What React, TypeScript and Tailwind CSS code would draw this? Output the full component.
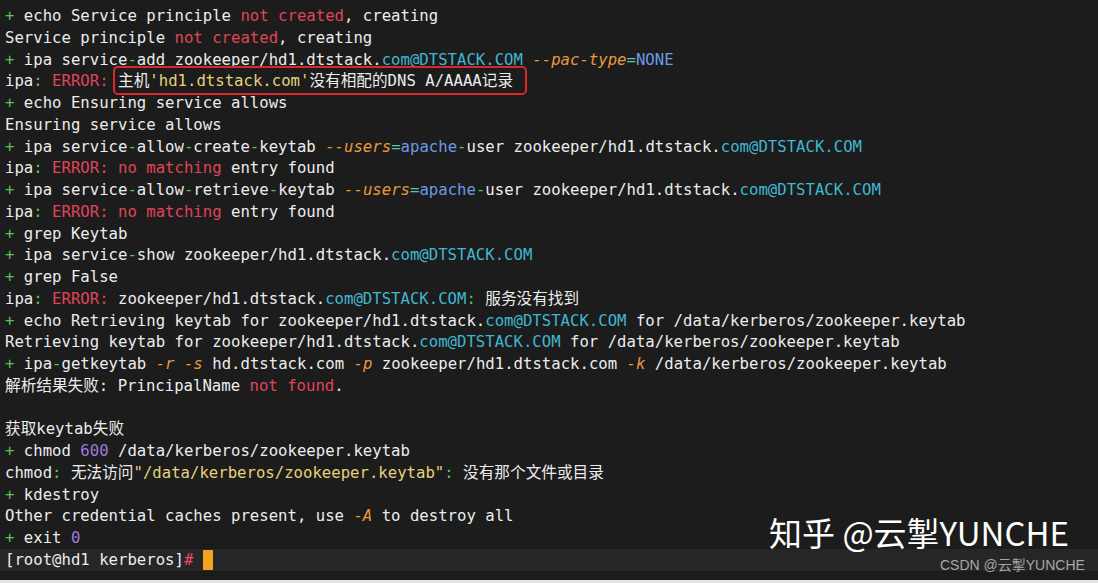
import React from "react";

type Seg = [string, string?];

const G = "text-[#58c458]";
const R = "text-[#e0445a]";
const C = "text-[#41b6cf]";
const O = "text-[#e8993c] italic";
const T = "text-[#5cc6a8]";
const B = "text-[#6b9ae6]";
const Y = "text-[#e4d27a]";
const P = "text-[#9b7bdc]";
const K = "text-[#e84a6a]";

const lines: Seg[][] = [
  [["+", G], [" echo Service principle "], ["not created", R], [", creating"]],
  [["Service principle "], ["not created", R], [", creating"]],
  [["+", G], [" ipa service"], ["-", G], ["add zookeeper/hd1.dtstack."], ["com@DTSTACK.COM", C], [" "], ["--pac-type", O], ["=", T], ["NONE", B]],
  [],
  [["+", G], [" echo Ensuring service allows"]],
  [["Ensuring service allows"]],
  [["+", G], [" ipa service"], ["-", G], ["allow"], ["-", G], ["create"], ["-", G], ["keytab "], ["--users", O], ["=", T], ["apache", B], ["-", G], ["user zookeeper/hd1.dtstack."], ["com@DTSTACK.COM", C]],
  [["ipa"], [":", G], [" "], ["ERROR: no matching", R], [" entry found"]],
  [["+", G], [" ipa service"], ["-", G], ["allow"], ["-", G], ["retrieve"], ["-", G], ["keytab "], ["--users", O], ["=", T], ["apache", B], ["-", G], ["user zookeeper/hd1.dtstack."], ["com@DTSTACK.COM", C]],
  [["ipa"], [":", G], [" "], ["ERROR: no matching", R], [" entry found"]],
  [["+", G], [" grep Keytab"]],
  [["+", G], [" ipa service"], ["-", G], ["show zookeeper/hd1.dtstack."], ["com@DTSTACK.COM", C]],
  [["+", G], [" grep False"]],
  [["ipa"], [":", G], [" "], ["ERROR:", R], [" zookeeper/hd1.dtstack."], ["com@DTSTACK.COM", C], [":", G], [" 服务没有找到"]],
  [["+", G], [" echo Retrieving keytab for zookeeper/hd1.dtstack."], ["com@DTSTACK.COM", C], [" for /data/kerberos/zookeeper.keytab"]],
  [["Retrieving keytab for zookeeper/hd1.dtstack."], ["com@DTSTACK.COM", C], [" for /data/kerberos/zookeeper.keytab"]],
  [["+", G], [" ipa"], ["-", G], ["getkeytab "], ["-r", O], [" "], ["-s", O], [" hd.dtstack.com "], ["-p", O], [" zookeeper/hd1.dtstack.com "], ["-k", O], [" /data/kerberos/zookeeper.keytab"]],
  [["解析结果失败: PrincipalName "], ["not found", R], ["."]],
  [[" "]],
  [["获取keytab失败"]],
  [["+", G], [" chmod "], ["600", P], [" /data/kerberos/zookeeper.keytab"]],
  [["chmod"], [":", G], [" 无法访问"], ['"/data/kerberos/zookeeper.keytab"', Y], [":", G], [" 没有那个文件或目录"]],
  [["+", G], [" kdestroy"]],
  [["Other credential caches present, use "], ["-A", O], [" to destroy all"]],
  [["+", G], [" exit "], ["0", P]],
];

const Segs = ({ segs }: { segs: Seg[] }) => (
  <>
    {segs.map(([t, cls], i) => (
      <span key={i} className={cls}>
        {t}
      </span>
    ))}
  </>
);

const App = () => {
  return (
    <div className="relative w-[1098px] h-[583px] overflow-hidden bg-[#1c1c1c] flex flex-col text-[#ececec] font-['DejaVu_Sans_Mono','Noto_Sans_CJK_SC',monospace] text-[15.65px]">
      <div className="pt-[5px]">
        {lines.map((segs, i) => (
          <div key={i} className="h-[21.76px] leading-[21.76px] pl-[5px] whitespace-pre">
            {i === 3 ? (
              <>
                <span>ipa</span>
                <span className={G}>:</span>
                <span> </span>
                <span className={R}>ERROR:</span>
                <span> </span>
                <span className="ml-[-5px] pl-[3px] pr-[12px] py-[3px] border-2 border-[#d8282c] rounded-[5px]">
                  <span>主机</span>
                  <span className={Y}>'hd1.dtstack.com'</span>
                  <span>没有相配的DNS A/AAAA记录</span>
                </span>
              </>
            ) : (
              <Segs segs={segs} />
            )}
          </div>
        ))}
        <div className="h-[21.76px] leading-[21.76px] pl-[5px] whitespace-pre bg-[#262626] flex items-center">
          <span>[root@hd1 kerberos]</span>
          <span className={K}>#</span>
          <span> </span>
          <span className="inline-block w-[10px] h-[20px] bg-[#f5a21e]" />
        </div>
      </div>
      <div className="flex-1" />
      <div className="h-[3px] bg-[#e4e4e4]" />

      <div className="absolute left-[769px] top-[516px] text-white text-[33px] leading-none font-['Noto_Sans_CJK_SC',sans-serif] whitespace-pre">
        知乎 @云掣YUNCHE
      </div>
      <div className="absolute left-[940px] top-[558px] text-[#a8a8a8] text-[14px] leading-none font-['Liberation_Sans','Noto_Sans_CJK_SC',sans-serif] whitespace-pre">
        CSDN @云掣YUNCHE
      </div>
    </div>
  );
};

export default App;
